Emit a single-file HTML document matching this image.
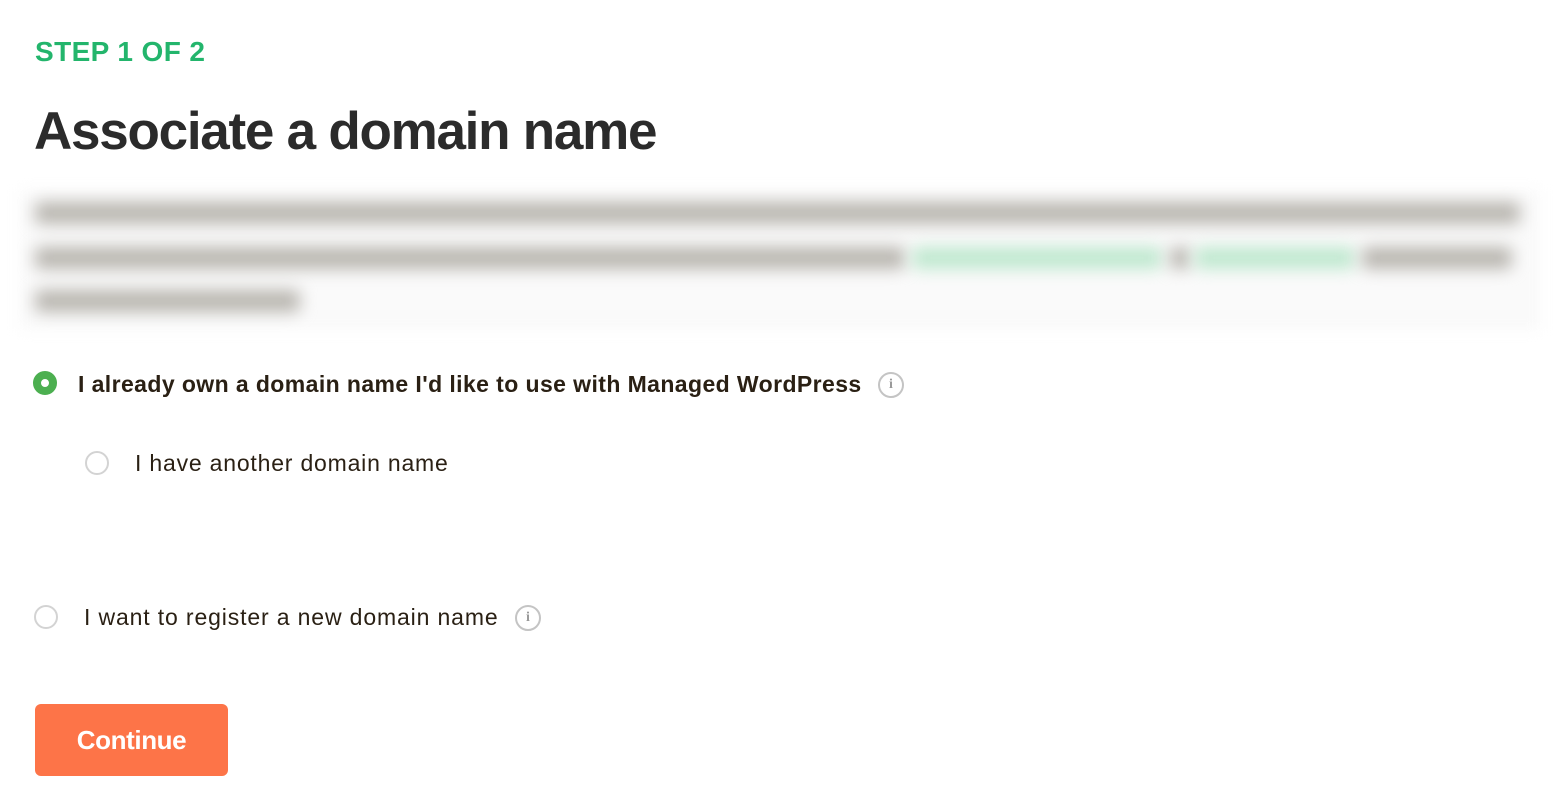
<!DOCTYPE html>
<html><head><style>
body{margin:0;width:1568px;height:804px;background:#fff;font-family:"Liberation Sans",sans-serif;position:relative;overflow:hidden;color:#2a2014}
.a{position:absolute;white-space:nowrap}
.blur{position:absolute;height:22px;background:#b9b6b0;filter:blur(8px);border-radius:6px}
.r{position:absolute;width:24px;height:24px;border-radius:50%;box-sizing:border-box;border:2px solid #d3d3d3;background:#fff}
.i{position:absolute;width:26px;height:26px;border-radius:50%;box-sizing:border-box;border:2px solid #c4c4c4;color:#999;font:bold 14px "Liberation Serif",serif;text-align:center;line-height:22px}
</style></head><body>
<div class="a" style="left:35px;top:36px;font-size:28px;font-weight:bold;color:#23b56c;letter-spacing:0.4px">STEP 1 OF 2</div>
<div class="a" style="left:34px;top:101px;font-size:53px;font-weight:bold;color:#2b2b2b;letter-spacing:-1.25px">Associate a domain name</div>
<div style="position:absolute;left:20px;top:190px;width:1520px;height:140px;background:#fafafa;filter:blur(6px)"></div>
<div class="blur" style="left:35px;top:202px;width:1485px"></div>
<div class="blur" style="left:35px;top:247px;width:870px"></div>
<div class="blur" style="left:912px;top:247px;width:250px;background:#bfe8cf"></div>
<div class="blur" style="left:1170px;top:247px;width:20px"></div>
<div class="blur" style="left:1195px;top:247px;width:160px;background:#bfe8cf"></div>
<div class="blur" style="left:1362px;top:247px;width:150px"></div>
<div class="blur" style="left:35px;top:290px;width:265px"></div>
<div class="r" style="left:33px;top:371px;border:8px solid #4caf50"></div>
<div class="a" style="left:78px;top:371px;font-size:23px;font-weight:bold;letter-spacing:0.41px">I already own a domain name I'd like to use with Managed WordPress</div>
<div class="i" style="left:878px;top:372px">i</div>
<div class="r" style="left:85px;top:451px"></div>
<div class="a" style="left:135px;top:450px;font-size:23px;letter-spacing:0.8px">I have another domain name</div>
<div class="r" style="left:34px;top:605px"></div>
<div class="a" style="left:84px;top:604px;font-size:23px;letter-spacing:0.86px">I want to register a new domain name</div>
<div class="i" style="left:515px;top:605px">i</div>
<div style="position:absolute;left:35px;top:704px;width:193px;height:72px;background:#fd7448;border-radius:6px;color:#fff;font-size:26px;font-weight:bold;text-align:center;line-height:72px;letter-spacing:-0.4px">Continue</div>
</body></html>
